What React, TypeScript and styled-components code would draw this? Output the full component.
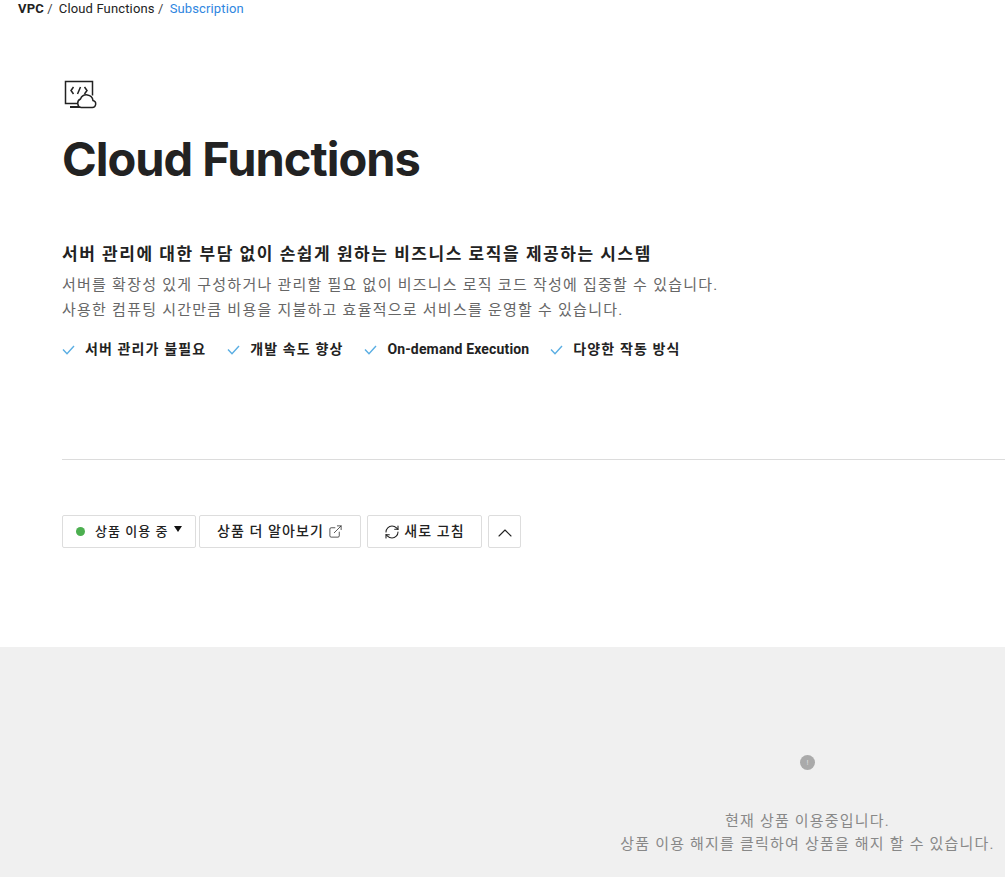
import React from "react";
import styled, { createGlobalStyle } from "styled-components";
import { ExternalLink, RefreshCw, ChevronUp } from "lucide-react";

const GlobalStyle = createGlobalStyle`
    html, body {
        margin: 0;
        padding: 0;
        height: 100%;
        background: #fff;
        overflow: hidden;
    }
    body {
        font-family: Roboto, "Noto Sans CJK KR", sans-serif;
        color: #222;
    }
`;

const Page = styled.div`
    display: flex;
    flex-direction: column;
    height: 877px;
    overflow: hidden;
`;
const Breadcrumb = styled.nav`
    display: flex;
    align-items: center;
    height: 17px;
    padding-left: 18px;
    font-size: 13px;
    line-height: 17px;
    letter-spacing: 0.14px;
`;
const Crumb = styled.span<{ $bold?: boolean; $active?: boolean }>`
    font-weight: ${(p) => (p.$bold ? 700 : 400)};
    color: ${(p) => (p.$active ? "#2f86e0" : "#222")};
`;
const Slash = styled.span`
    margin: 0 6px 0 3.5px;
    color: #444;
`;
const Header = styled.header`
    padding: 62px 0 0 62px;
    height: 630px;
    box-sizing: border-box;
    flex: none;
`;
const ServiceIcon = styled.svg`
    display: block;
    margin-left: 2px;
    width: 34px;
    height: 30px;
`;
const Title = styled.h1`
    margin: 20px 0 0;
    font-family: Inter, Roboto, sans-serif;
    font-size: 47px;
    line-height: 60px;
    font-weight: 700;
    letter-spacing: -1px;
    color: #222;
`;
const SubTitle = styled.h2`
    margin: 52px 0 0;
    font-size: 17px;
    line-height: 26px;
    font-weight: 700;
    letter-spacing: 0.09em;
    color: #222;
`;
const Description = styled.p`
    margin: 6px 0 0;
    font-size: 15px;
    line-height: 25px;
    letter-spacing: 0.083em;
    color: #666;
`;
const Features = styled.ul`
    display: flex;
    gap: 21px;
    margin: 16px 0 0;
    padding: 0;
    list-style: none;
`;
const Feature = styled.li`
    display: flex;
    align-items: center;
    gap: 10px;
    font-size: 14px;
    line-height: 20px;
    font-weight: 700;
    letter-spacing: 0.08em;
    color: #222;
`;
const CheckMark = styled.svg`
    display: block;
    width: 13px;
    height: 10px;
    margin-top: 1px;
    fill: none;
    stroke: #5aaee3;
    stroke-width: 1.4;
`;
const Latin = styled.span`
    letter-spacing: 0.15px;
`;
const Divider = styled.hr`
    margin: 100px 0 0;
    border: 0;
    border-top: 1px solid #dcdcdc;
`;
const Actions = styled.div`
    display: flex;
    margin-top: 55px;
`;
const Button = styled.button<{ $gap?: number }>`
    display: flex;
    align-items: center;
    justify-content: center;
    height: 33px;
    box-sizing: border-box;
    margin-right: ${(p) => p.$gap ?? 3}px;
    background: #fff;
    border: 1px solid #ddd;
    border-radius: 2px;
    font-family: inherit;
    font-size: 14px;
    font-weight: 500;
    letter-spacing: 0.08em;
    color: #222;
    padding: 0 0 3px;
`;
const StatusButton = styled(Button)`
    width: 134px;
    justify-content: flex-start;
    padding-left: 13px;
    font-size: 13px;
`;
const Dot = styled.span`
    width: 9px;
    height: 9px;
    border-radius: 50%;
    background: #4caf50;
    margin: 3px 10px 0 0;
`;
const Caret = styled.span`
    width: 0;
    height: 0;
    margin: 0 0 3px 5px;
    border-left: 4.5px solid transparent;
    border-right: 4.5px solid transparent;
    border-top: 6px solid #111;
`;
const LinkButton = styled(Button)`
    width: 162px;
    gap: 4px;
    svg {
        margin-top: 3px;
    }
`;
const RefreshButton = styled(Button)`
    width: 115px;
    gap: 4px;
    svg {
        margin-top: 3px;
    }
`;
const FoldButton = styled(Button)`
    width: 33px;
    padding: 3px 0 0;
`;
const Notice = styled.section`
    flex: 1;
    background: #f0f0f0;
    padding: 108px 0 0 621px;
`;
const NoticeInner = styled.div`
    display: flex;
    flex-direction: column;
    align-items: center;
    width: 373px;
    font-size: 15px;
    line-height: 23px;
    letter-spacing: 0.08em;
    white-space: nowrap;
    color: #888;
    text-align: center;
`;
const InfoMark = styled.span`
    display: block;
    width: 15px;
    height: 15px;
    line-height: 15px;
    border-radius: 50%;
    background: #aaa;
    color: #ddd;
    font-size: 8px;
    letter-spacing: 0;
    margin-bottom: 40px;
`;

const CloudCodeIcon = () => (
    <ServiceIcon viewBox="0 0 34 30" fill="none" stroke="#222" strokeWidth="1.5">
        <path d="M13 24.5H1.5V2.5h27v14" />
        <path d="M9.5 8 7 11.5 9.5 15M20.5 8 23 11.5 20.5 15M16.5 8l-3 7" />
        <path d="M6 28h10" strokeWidth="2" />
        <path d="M17 28.5h11a3.5 3.5 0 0 0 1-6.9 6.5 6.5 0 0 0-12.5-1.6 4.5 4.5 0 0 0 .5 8.5Z" fill="#fff" />
    </ServiceIcon>
);

const Tick = () => (
    <CheckMark viewBox="0 0 13 10">
        <path d="M1 4.5 5 8.8 12 1" />
    </CheckMark>
);

export default function App() {
    return (
        <Page>
            <GlobalStyle />
            <Breadcrumb>
                <Crumb $bold>VPC</Crumb>
                <Slash>/</Slash>
                <Crumb>Cloud Functions</Crumb>
                <Slash>/</Slash>
                <Crumb $active>Subscription</Crumb>
            </Breadcrumb>
            <Header>
                <CloudCodeIcon />
                <Title>Cloud Functions</Title>
                <SubTitle>서버 관리에 대한 부담 없이 손쉽게 원하는 비즈니스 로직을 제공하는 시스템</SubTitle>
                <Description>
                    서버를 확장성 있게 구성하거나 관리할 필요 없이 비즈니스 로직 코드 작성에 집중할 수 있습니다.
                    <br />
                    사용한 컴퓨팅 시간만큼 비용을 지불하고 효율적으로 서비스를 운영할 수 있습니다.
                </Description>
                <Features>
                    <Feature>
                        <Tick />
                        서버 관리가 불필요
                    </Feature>
                    <Feature>
                        <Tick />
                        개발 속도 향상
                    </Feature>
                    <Feature>
                        <Tick />
                        <Latin>On-demand Execution</Latin>
                    </Feature>
                    <Feature>
                        <Tick />
                        다양한 작동 방식
                    </Feature>
                </Features>
                <Divider />
                <Actions>
                    <StatusButton>
                        <Dot />
                        상품 이용 중
                        <Caret />
                    </StatusButton>
                    <LinkButton $gap={6}>
                        상품 더 알아보기
                        <ExternalLink size={15} strokeWidth={1.2} />
                    </LinkButton>
                    <RefreshButton $gap={6}>
                        <RefreshCw size={16} strokeWidth={1.6} />
                        새로 고침
                    </RefreshButton>
                    <FoldButton>
                        <ChevronUp size={24} strokeWidth={1.1} />
                    </FoldButton>
                </Actions>
            </Header>
            <Notice>
                <NoticeInner>
                    <InfoMark>!</InfoMark>
                    현재 상품 이용중입니다.
                    <br />
                    상품 이용 해지를 클릭하여 상품을 해지 할 수 있습니다.
                </NoticeInner>
            </Notice>
        </Page>
    );
}
